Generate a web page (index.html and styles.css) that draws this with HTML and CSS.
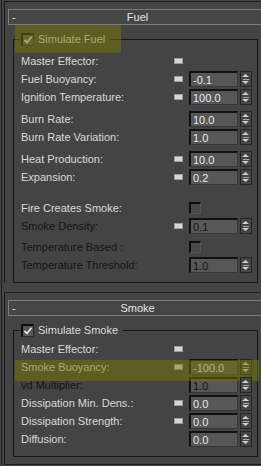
FILE: index.html
```html
<!DOCTYPE html>
<html lang="en">

<head>
    <meta charset="UTF-8">
    <meta name="viewport" content="width=device-width, initial-scale=1.0">
    <title>Fire Settings</title>
    <link rel="stylesheet" href="styles.css">
</head>

<body>
    <div class="rollouts">
        <section class="rollout">
            <div class="rollout-header"><span class="toggle">-</span><h2>Fuel</h2></div>
            <fieldset class="group">
                <legend class="highlight">
                    <span class="check"><svg viewBox="0 0 10 10" width="10" height="10"><path d="M1.5 5 L4 7.5 L8.5 1.8" /></svg></span>
                    Simulate Fuel
                </legend>
                <div class="row"><label>Master Effector:</label><span class="map"></span></div>
                <div class="row"><label>Fuel Buoyancy:</label><span class="map"></span><input class="num" value="-0.1"><span class="spin"></span></div>
                <div class="row"><label>Ignition Temperature:</label><span class="map"></span><input class="num" value="100.0"><span class="spin"></span></div>
                <div class="row spaced"><label>Burn Rate:</label><input class="num" value="10.0"><span class="spin"></span></div>
                <div class="row"><label>Burn Rate Variation:</label><input class="num" value="1.0"><span class="spin"></span></div>
                <div class="row spaced"><label>Heat Production:</label><span class="map"></span><input class="num" value="10.0"><span class="spin"></span></div>
                <div class="row"><label>Expansion:</label><span class="map"></span><input class="num" value="0.2"><span class="spin"></span></div>
                <div class="row section"><label>Fire Creates Smoke:</label><span class="check off"></span></div>
                <div class="row disabled"><label>Smoke Density:</label><span class="map"></span><input class="num" value="0.1" disabled><span class="spin"></span></div>
                <div class="row disabled nudge"><label>Temperature Based :</label><span class="check off"></span></div>
                <div class="row disabled"><label>Temperature Threshold:</label><input class="num" value="1.0" disabled><span class="spin"></span></div>
            </fieldset>
        </section>

        <section class="rollout">
            <div class="rollout-header"><span class="toggle">-</span><h2>Smoke</h2></div>
            <fieldset class="group compact">
                <legend>
                    <span class="check"><svg viewBox="0 0 10 10" width="10" height="10"><path d="M1.5 5 L4 7.5 L8.5 1.8" /></svg></span>
                    Simulate Smoke
                </legend>
                <div class="row"><label>Master Effector:</label><span class="map"></span></div>
                <div class="row highlight"><label>Smoke Buoyancy:</label><span class="map"></span><input class="num" value="-100.0"><span class="spin"></span></div>
                <div class="row disabled"><label>vd Multiplier:</label><input class="num" value="1.0" disabled><span class="spin"></span></div>
                <div class="row"><label>Dissipation Min. Dens.:</label><span class="map"></span><input class="num" value="0.0"><span class="spin"></span></div>
                <div class="row"><label>Dissipation Strength:</label><span class="map"></span><input class="num" value="0.0"><span class="spin"></span></div>
                <div class="row"><label>Diffusion:</label><input class="num" value="0.0"><span class="spin"></span></div>
            </fieldset>
        </section>
    </div>
</body>

</html>
```

FILE: styles.css
```css
body {
    margin: 0;
    height: 466px;
    overflow: hidden;
    background: #444444;
    color: #dadada;
    font-family: "Liberation Sans", Arial, sans-serif;
    font-size: 11px;
}

.rollouts {
    margin-left: 1px;
    padding: 1px 0 0 2px;
    border-left: 1px solid #1c1c1c;
    min-height: 466px;
}

.rollout {
    width: 258px;
    padding: 7px 3px 0 3px;
    border-top: 1px solid #1a1a1a;
    border-left: 1px solid #1a1a1a;
}

.rollout:last-child {
    border-bottom: 1px solid #1a1a1a;
}

/* Rollout title bar */
.rollout-header {
    display: grid;
    grid-template-columns: 20px 1fr 20px;
    align-items: center;
    height: 16px;
    box-sizing: border-box;
    border: 1px solid #7c7c7c;
    border-right: none;
    background: #464646;
}

.rollout-header .toggle {
    padding-left: 3px;
    color: #e4e4e4;
    line-height: 14px;
}

.rollout-header h2 {
    margin: 0;
    font-size: 11px;
    font-weight: normal;
    line-height: 14px;
    text-align: center;
    color: #e4e4e4;
}

/* Group box */
.group {
    margin: 7px 8px 9px 5px;
    padding: 6px 5px 8px 7px;
    border: 1px solid #161616;
    min-width: 0;
}

.rollout:last-child .group {
    margin-bottom: 7px;
}

.group.compact {
    padding-top: 3px;
}

.group legend {
    display: flex;
    align-items: center;
    gap: 4px;
    height: 14px;
    margin-left: -1px;
    padding: 0 5px 0 1px;
    line-height: 14px;
    color: #dadada;
}

/* Rows */
.row {
    display: grid;
    grid-template-columns: 1fr 15px 51px 12px;
    align-items: center;
    height: 18px;
}

.row.spaced {
    margin-top: 4px;
}

.row.section {
    margin-top: 13px;
}

.row.nudge {
    margin-top: 3px;
}

.row label {
    grid-column: 1;
    white-space: nowrap;
}

.row.disabled label {
    color: #151515;
}

.map {
    grid-column: 2;
    width: 9px;
    height: 6px;
    box-sizing: border-box;
    border: 1px solid #9c9c9c;
    background: #d6d6d6;
}

.num {
    grid-column: 3;
    width: 49px;
    height: 16px;
    box-sizing: border-box;
    margin: 0;
    padding: 0 0 0 2px;
    border-top: 2px solid #111;
    border-left: 2px solid #111;
    border-right: 1px solid #383838;
    border-bottom: 1px solid #383838;
    background: #575757;
    color: #e6e8ee;
    font: 11px "Liberation Sans", Arial, sans-serif;
    outline: none;
}

.num:disabled {
    color: #151515;
    -webkit-text-fill-color: #151515;
    opacity: 1;
    background: #575757;
}

/* Spinner arrows */
.spin {
    grid-column: 4;
    position: relative;
    width: 12px;
    height: 16px;
    box-sizing: border-box;
    border: 1px solid #262626;
    background: linear-gradient(#a8a8a8, #a8a8a8) 2px 7px / 6px 1px no-repeat, #454545;
}

.spin::before,
.spin::after {
    content: "";
    position: absolute;
    left: 1px;
    width: 7px;
    height: 3px;
    background: #d2d2d2;
}

.spin::before {
    top: 2px;
    clip-path: polygon(50% 0, 100% 100%, 0 100%);
}

.spin::after {
    top: 9px;
    clip-path: polygon(0 0, 100% 0, 50% 100%);
}

/* Checkboxes */
.check {
    display: flex;
    align-items: center;
    justify-content: center;
    width: 13px;
    height: 13px;
    box-sizing: border-box;
    border-top: 2px solid #0e0e0e;
    border-left: 2px solid #0e0e0e;
    border-right: 1px solid #2c2c2c;
    border-bottom: 1px solid #2c2c2c;
    background: #555;
}

.check svg path {
    fill: none;
    stroke: #e0e0e0;
    stroke-width: 1.8;
}

.row .check {
    grid-column: 3;
    width: 12px;
    height: 12px;
    border-right-color: #555;
    border-bottom-color: #555;
    background: #484848;
}

/* Yellow focus highlight */
.highlight {
    position: relative;
}

.highlight::after {
    content: "";
    position: absolute;
    background: rgba(120, 120, 0, 0.5);
    pointer-events: none;
}

legend.highlight::after {
    inset: -7px -11px -7px -5px;
}

.row.highlight::after {
    inset: 2px -7px -5px -6px;
}
```
